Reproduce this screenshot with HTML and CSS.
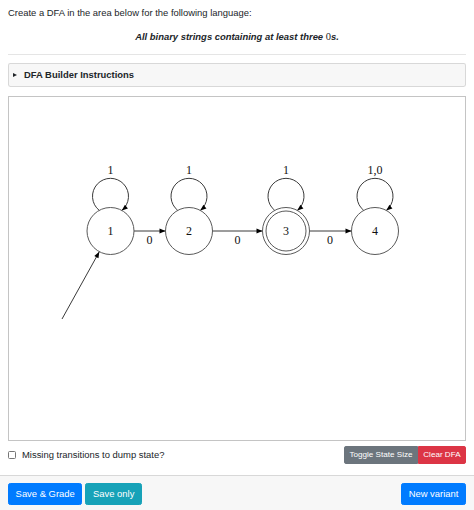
FILE: index.html
```html
<!DOCTYPE html>
<html lang="en">
<head>
<meta charset="utf-8">
<title>DFA Builder</title>
<link rel="stylesheet" href="styles.css">
</head>
<body>
<div class="card">
  <div class="card-body">
    <p class="prompt">Create a DFA in the area below for the following language:</p>
    <p class="language"><strong><em>All binary strings containing at least three <span class="math">0</span>s.</em></strong></p>
    <hr class="divider">
    <details class="instructions"><summary>DFA Builder Instructions</summary></details>
    <div class="canvas">
      <svg class="diagram" viewBox="9 97 456 343" width="456" height="343" xmlns="http://www.w3.org/2000/svg">
        <defs>
          <marker id="arrow" viewBox="0 0 10 10" refX="10" refY="5" markerWidth="7" markerHeight="6" markerUnits="userSpaceOnUse" orient="auto">
            <path d="M0 1 L10 5 L0 9 z" fill="#000"/>
          </marker>
        </defs>
        <g class="edges">
          <path d="M99.26 210.4 A18 18 0 1 1 121.74 210.4" marker-end="url(#arrow)"/>
          <path d="M177.76 210.4 A18 18 0 1 1 200.24 210.4" marker-end="url(#arrow)"/>
          <path d="M274.76 210.4 A18 18 0 1 1 297.24 210.4" marker-end="url(#arrow)"/>
          <path d="M363.76 210.4 A18 18 0 1 1 386.24 210.4" marker-end="url(#arrow)"/>
          <line x1="134" y1="231" x2="165.5" y2="231" marker-end="url(#arrow)"/>
          <line x1="212.5" y1="231" x2="262.5" y2="231" marker-end="url(#arrow)"/>
          <line x1="309.5" y1="231" x2="351.5" y2="231" marker-end="url(#arrow)"/>
          <line x1="62" y1="319" x2="99.3" y2="251.8" marker-end="url(#arrow)"/>
        </g>
        <g class="states">
          <circle cx="110.5" cy="231" r="23.5"/>
          <circle cx="189" cy="231" r="23.5"/>
          <circle cx="286" cy="231" r="23.5"/>
          <circle cx="286" cy="231" r="20"/>
          <circle cx="375" cy="231" r="23.5"/>
        </g>
        <g class="labels">
          <text x="110.5" y="235">1</text>
          <text x="189" y="235">2</text>
          <text x="286" y="235">3</text>
          <text x="375" y="235">4</text>
          <text x="110.5" y="174">1</text>
          <text x="189" y="174">1</text>
          <text x="286" y="174">1</text>
          <text x="375" y="174">1,0</text>
          <text x="149.5" y="244">0</text>
          <text x="237.5" y="244">0</text>
          <text x="330" y="244">0</text>
        </g>
      </svg>
    </div>
    <div class="controls">
      <label class="dump"><input type="checkbox" class="check"><span>Missing transitions to dump state?</span></label>
      <div class="btn-group">
        <button class="btn btn-sm btn-secondary">Toggle State Size</button><button class="btn btn-sm btn-danger">Clear DFA</button>
      </div>
    </div>
  </div>
  <div class="card-footer">
    <button class="btn btn-primary">Save &amp; Grade</button>
    <button class="btn btn-info">Save only</button>
    <button class="btn btn-primary push">New variant</button>
  </div>
</div>
</body>
</html>
```
FILE: styles.css
```css
* { box-sizing: border-box; }
html, body { margin: 0; padding: 0; background: #fff; }
body {
  font-family: "Liberation Sans", Arial, sans-serif;
  font-size: 9.44px;
  line-height: 1.5;
  color: #212529;
}
.card-body { padding: 6px 8px 11px; }
p { margin: 0 0 9px; }
.language { text-align: center; }
.language .math {
  font-family: "Liberation Serif", "Times New Roman", serif;
  font-style: normal;
  font-weight: normal;
  font-size: 10.5px;
}
.divider {
  border: 0;
  border-top: 1px solid rgba(0,0,0,.1);
  margin: 0 0 8.5px;
}
.instructions {
  border: 1px solid rgba(0,0,0,.125);
  border-radius: 2.4px;
  background: #f7f7f7;
  margin-bottom: 9px;
}
.instructions summary {
  list-style: none;
  display: flex;
  align-items: center;
  padding: 3.9px 4px;
  font-weight: bold;
}
.instructions summary::-webkit-details-marker { display: none; }
.instructions summary::before {
  content: "";
  width: 0;
  height: 0;
  border-left: 4px solid #212529;
  border-top: 2.5px solid transparent;
  border-bottom: 2.5px solid transparent;
  margin-right: 7px;
}
.canvas {
  border: 1px solid #c4c4c4;
  height: 345px;
  margin-bottom: 5px;
  background: #fff;
}
.diagram { display: block; }
.edges path, .edges line { fill: none; stroke: #3a3a3a; stroke-width: 1; }
.states circle { fill: none; stroke: #5a5a5a; stroke-width: 1; }
.labels text {
  font-family: "Liberation Serif", "Times New Roman", serif;
  font-size: 12px;
  text-anchor: middle;
  fill: #111;
}
.controls {
  display: flex;
  justify-content: space-between;
  align-items: center;
  height: 18px;
}
.dump { display: flex; align-items: center; gap: 6px; }
.check {
  -webkit-appearance: none;
  appearance: none;
  width: 8px;
  height: 8px;
  margin: 0;
  border: 1px solid #767676;
  border-radius: 1.5px;
  background: #fff;
}
.btn {
  font-family: inherit;
  font-size: 9.44px;
  line-height: 1.5;
  padding: 3.3px 6.6px;
  border: 1px solid transparent;
  border-radius: 2.36px;
  color: #fff;
  cursor: pointer;
}
.btn-sm { font-size: 8.1px; line-height: 1.5; padding: 2px 4.4px; border-radius: 1.9px; height: 18px; }
.btn-group { display: flex; }
.btn-group .btn:first-child { border-top-right-radius: 0; border-bottom-right-radius: 0; }
.btn-group .btn:last-child { border-top-left-radius: 0; border-bottom-left-radius: 0; }
.btn-primary { background: #007bff; border-color: #007bff; }
.btn-info { background: #17a2b8; border-color: #17a2b8; }
.btn-secondary { background: #6c757d; border-color: #6c757d; }
.btn-danger { background: #dc3545; border-color: #dc3545; }
.card-footer {
  display: flex;
  gap: 3px;
  background: #f7f7f7;
  border-top: 1px solid rgba(0,0,0,.125);
  padding: 7px 8px;
}
.card-footer .btn { height: 22px; padding-top: 0; padding-bottom: 0; }
.push { margin-left: auto; }
```
